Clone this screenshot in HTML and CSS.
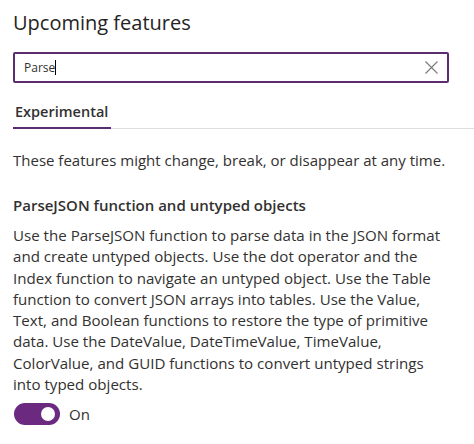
FILE: index.html
```html
<!DOCTYPE html>
<html>
<head>
<meta charset="utf-8">
<link rel="stylesheet" href="styles.css">
</head>
<body>
<div class="panel">
  <h1 class="title">Upcoming features</h1>
  <div class="search">
    <span class="search-text">Parse</span><span class="caret"></span>
    <svg class="clear" width="13" height="13" viewBox="0 0 13 13"><path d="M0.5 0.5 L12.5 12.5 M12.5 0.5 L0.5 12.5" stroke="#7a7876" stroke-width="1.1" fill="none"/></svg>
  </div>
  <div class="tabs">
    <div class="tab active">Experimental</div>
    <div class="tab-rest"></div>
  </div>
  <p class="note">These features might change, break, or disappear at any time.</p>
  <h2 class="feature-title">ParseJSON function and untyped objects</h2>
  <p class="feature-desc">Use the ParseJSON function to parse data in the JSON format and create untyped objects. Use the dot operator and the Index function to navigate an untyped object. Use the Table function to convert JSON arrays into tables. Use the Value, Text, and Boolean functions to restore the type of primitive data. Use the DateValue, DateTimeValue, TimeValue, ColorValue, and GUID functions to convert untyped strings into typed objects.</p>
  <div class="toggle-row">
    <span class="toggle"><span class="knob"></span></span>
    <span class="toggle-label">On</span>
  </div>
</div>
</body>
</html>
```
FILE: styles.css
```css
html, body {
  margin: 0;
  padding: 0;
  background: #ffffff;
}
body {
  font-family: "Open Sans", "Noto Sans", sans-serif;
  color: #323130;
}
.panel {
  padding: 9px 0 0 13px;
}
.title {
  margin: 0;
  font-size: 20px;
  font-weight: 400;
  line-height: 28px;
  color: #252423;
}
.search {
  margin-top: 15px;
  height: 27px;
  border: 2px solid #5c2d6e;
  border-radius: 2px;
  display: flex;
  align-items: center;
  padding: 0 0 0 9px;
  box-sizing: content-box;
  width: 423px;
}
.search-text {
  font-size: 12px;
  color: #323130;
}
.caret {
  display: inline-block;
  width: 1px;
  height: 15px;
  background: #000;
}
.clear {
  margin-left: auto;
  margin-right: 9px;
}
.tabs {
  display: flex;
  margin-top: 16px;
}
.tab {
  font-size: 14.5px;
  font-weight: 600;
  padding: 3px 3px 5px 2px;
  border-bottom: 2px solid #5c2d6e;
  line-height: 20px;
}
.tab-rest {
  flex: 1;
  border-bottom: 1px solid #e1dfdd;
}
.note {
  margin: 21px 0 0;
  font-size: 15px;
  line-height: 20px;
}
.feature-title {
  margin: 25px 0 0;
  font-size: 15px;
  font-weight: 600;
  line-height: 20px;
}
.feature-desc {
  margin: 10px 0 0;
  font-size: 15.1px;
  line-height: 21.3px;
  width: 442px;
}
.toggle-row {
  display: flex;
  align-items: center;
  margin-top: 8px;
  margin-left: 1px;
  gap: 9px;
}
.toggle {
  width: 46px;
  height: 22px;
  border-radius: 11px;
  background: #6b2a80;
  position: relative;
  display: inline-block;
}
.knob {
  position: absolute;
  right: 5px;
  top: 4px;
  width: 14px;
  height: 14px;
  border-radius: 50%;
  background: #fff;
}
.toggle-label {
  font-size: 15px;
}
```
